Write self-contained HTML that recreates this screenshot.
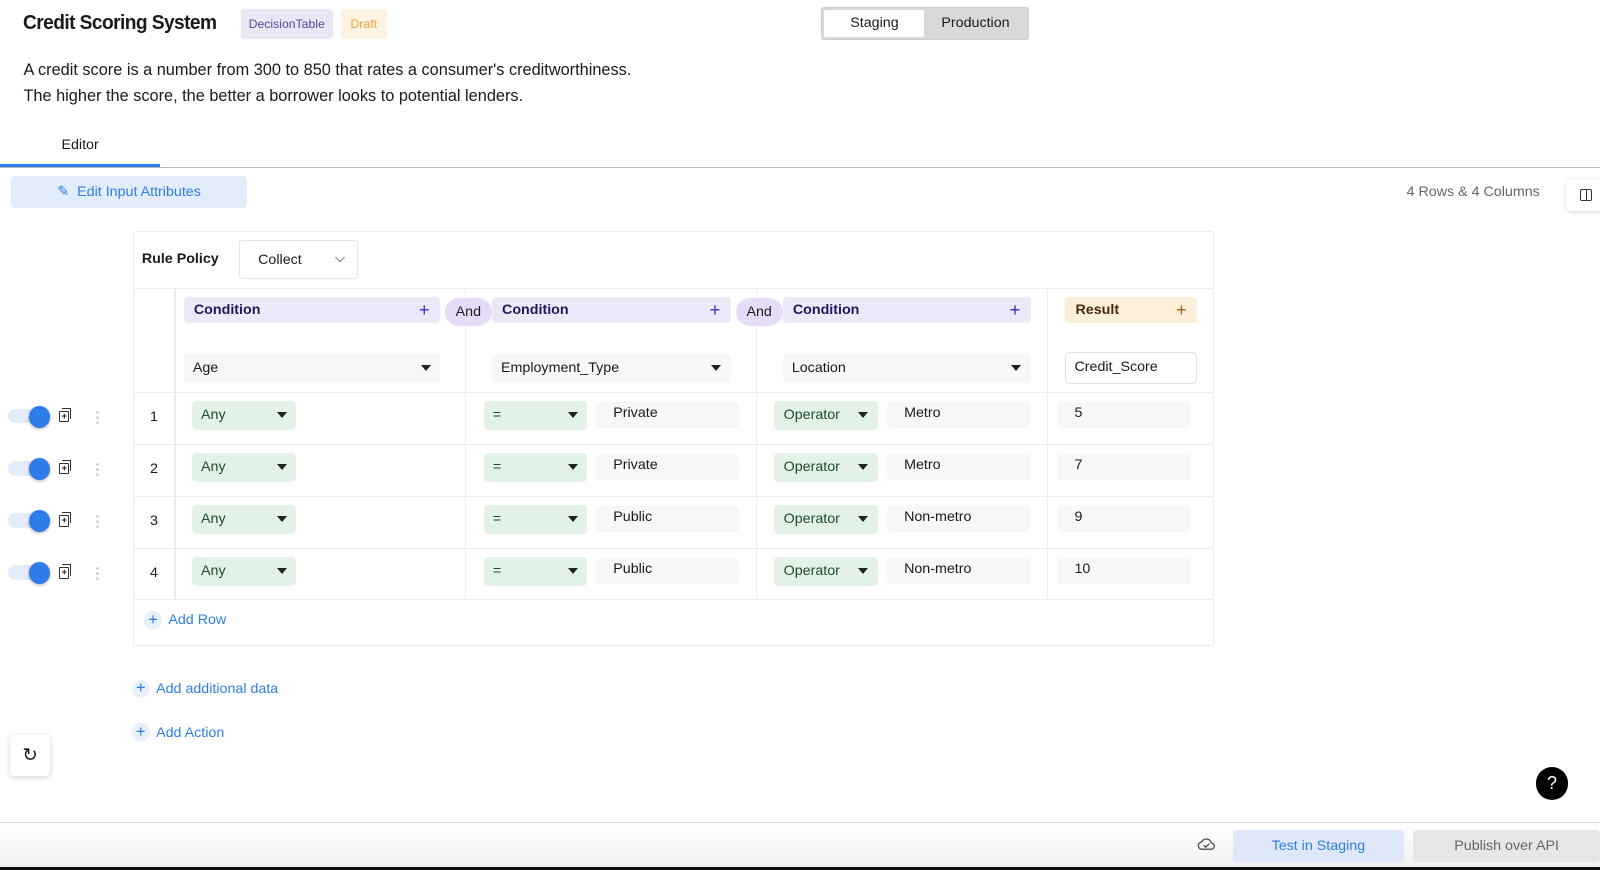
<!DOCTYPE html>
<html><head><meta charset="utf-8"><style>
*{box-sizing:border-box;margin:0;padding:0}
html,body{width:1600px;height:870px;overflow:hidden;background:#fff}
#w{zoom:1.0204;width:1568px;height:853px;position:relative;font-family:"Liberation Sans",sans-serif;color:#1a1a1a}
.a{position:absolute}
.pill{position:absolute;border-radius:4px;font-size:14px;display:flex;align-items:center}
.hd{background:#ebe8f7;color:#1f1a5e;font-weight:bold;padding:0 10px;justify-content:space-between;height:26px;top:291px}
.hd span.p{color:#3a2fc0;font-weight:normal;font-size:18px}
.and{position:absolute;top:292px;width:46px;height:27px;border-radius:14px;background:#e6dcf7;font-size:14px;display:flex;align-items:center;justify-content:center}
.sel{position:absolute;background:#f6f7f9;border-radius:4px;height:28px;font-size:14px;display:flex;align-items:center;padding:0 9px;justify-content:space-between}
.tri{width:0;height:0;border-left:5px solid transparent;border-right:5px solid transparent;border-top:6px solid #222}
.g{background:#e3f2e6;color:#1f4a2a}
.inp{position:absolute;background:#f6f7f9;border-radius:4px;height:25px;font-size:14px;padding:0 17px;line-height:23px}
.hl{position:absolute;left:131px;width:1058px;height:1px;background:#ececec}
.vl{position:absolute;width:1px;background:#ececec;top:283px;height:304px}
.blue{color:#2f7de8}
.plusc{display:inline-flex;width:18px;height:18px;border-radius:50%;background:#e8f0fc;color:#2f7de8;align-items:center;justify-content:center;font-size:16px;margin-right:6px}
</style></head><body><div id="w">
<div class="a" style="left:23px;top:12px;font-size:20px;font-weight:bold;letter-spacing:-0.6px;transform:scaleX(0.94);transform-origin:left">Credit Scoring System</div>
<div class="pill" style="left:236px;top:9px;width:90px;height:29px;background:#e9e6f5;color:#5a4aa0;font-size:12px;justify-content:center">DecisionTable</div>
<div class="pill" style="left:334px;top:9px;width:45px;height:29px;background:#fdf3e3;color:#e8a23a;font-size:12px;justify-content:center">Draft</div>
<div class="a" style="left:805px;top:7px;width:203px;height:32px;background:#d9d9d9;border-radius:3px;border:1px solid #ccc"></div>
<div class="pill" style="left:808px;top:10px;width:98px;height:26px;background:#fff;justify-content:center;font-size:14px;border-radius:2px">Staging</div>
<div class="a" style="left:906px;top:15px;width:100px;text-align:center;font-size:14px">Production</div>
<div class="a" style="left:23px;top:57px;font-size:16px;line-height:25px">A credit score is a number from 300 to 850 that rates a consumer's creditworthiness.<br>The higher the score, the better a borrower looks to potential lenders.</div>
<div class="a" style="left:0;top:134px;width:157px;text-align:center;font-size:14px">Editor</div>
<div class="a" style="left:0;top:164px;width:1568px;height:1px;background:#bbb"></div>
<div class="a" style="left:0;top:161px;width:157px;height:3px;background:#2f80ed"></div>
<div class="pill blue" style="left:11px;top:172px;width:231px;height:32px;background:#e3ecfb;justify-content:center">✎&nbsp;&nbsp;Edit Input Attributes</div>
<div class="a" style="right:59px;top:180px;font-size:14px;color:#666">4 Rows &amp; 4 Columns</div>
<div class="a" style="left:1535px;top:175px;width:40px;height:32px;background:#fff;box-shadow:0 1px 4px rgba(0,0,0,.15);border-radius:6px"><div class="a" style="left:13px;top:10px;width:12px;height:12px;border:1.5px solid #333;border-radius:2px"></div><div class="a" style="left:19px;top:10px;width:1.5px;height:12px;background:#333"></div></div>

<div class="a" style="left:130px;top:226px;width:1060px;height:407px;border:1px solid #ececec;border-radius:3px"></div>
<div class="a" style="left:139px;top:246px;font-size:14px;font-weight:bold">Rule Policy</div>
<div class="a" style="left:234px;top:235px;width:117px;height:38px;border:1px solid #e5e5e5;border-radius:3px;font-size:14px;padding:11px 18px">Collect<span style="position:absolute;right:12px;top:9px;font-size:13px">⌵</span></div>
<div class="hl" style="top:282px"></div><div class="hl" style="top:384px"></div><div class="hl" style="top:435px"></div><div class="hl" style="top:486px"></div><div class="hl" style="top:537px"></div><div class="hl" style="top:587px"></div>
<div class="vl" style="left:171px"></div><div class="vl" style="left:456px"></div><div class="vl" style="left:741px"></div><div class="vl" style="left:1026px"></div>

<div class="pill hd" style="left:180px;width:251px">Condition<span class="p">+</span></div>
<div class="and" style="left:436px">And</div>
<div class="pill hd" style="left:482px;width:234px">Condition<span class="p">+</span></div>
<div class="and" style="left:721px">And</div>
<div class="pill hd" style="left:767px;width:243px">Condition<span class="p">+</span></div>
<div class="pill hd" style="left:1044px;width:129px;background:#fcefd9;color:#4a2a10">Result<span class="p" style="color:#a8621c">+</span></div>

<div class="sel" style="left:180px;top:347px;width:251px">Age<i class="tri"></i></div>
<div class="sel" style="left:482px;top:347px;width:234px">Employment_Type<i class="tri"></i></div>
<div class="sel" style="left:767px;top:347px;width:243px">Location<i class="tri"></i></div>
<div class="a" style="left:1044px;top:345px;width:129px;height:31px;border:1px solid #e2e2e2;border-radius:4px;font-size:14px;padding:6px 8px">Credit_Score</div>

<div id="rows"></div>
<script>
var d=[["Private","Metro","5"],["Private","Metro","7"],["Public","Non-metro","9"],["Public","Non-metro","10"]],h="";
d.forEach(function(r,i){var y=393+i*51;
h+='<div class="a" style="left:8px;top:'+(y+8)+'px;width:40px;height:14px;border-radius:7px;background:#e3ecfb"></div><div class="a" style="left:28px;top:'+(y+5)+'px;width:21px;height:21px;border-radius:50%;background:#2f7de8;box-shadow:0 1px 3px rgba(0,0,0,.3)"></div>';
h+='<div class="a" style="left:58px;top:'+(y+10)+'px;width:10px;height:11px;border:1.3px solid #333;border-radius:1px;font-size:9px;line-height:8px;text-align:center;font-weight:bold">+</div><div class="a" style="left:61px;top:'+(y+7)+'px;width:9px;height:11px;border-top:1.3px solid #333;border-right:1.3px solid #333"></div>';
h+='<div class="a" style="left:94px;top:'+(y+9)+'px;width:3px;height:14px;background:radial-gradient(circle,#ccc 1.2px,transparent 1.5px) 0 0/3px 5px"></div>';
h+='<div class="a" style="left:147px;top:'+(y+8)+'px;font-size:14px">'+(i+1)+'</div>';
h+='<div class="sel g" style="left:188px;top:'+y+'px;width:102px">Any<i class="tri"></i></div>';
h+='<div class="sel g" style="left:474px;top:'+y+'px;width:101px">=<i class="tri"></i></div>';
h+='<div class="inp" style="left:584px;top:'+(y+1)+'px;width:140px">'+r[0]+'</div>';
h+='<div class="sel g" style="left:759px;top:'+y+'px;width:101px">Operator<i class="tri"></i></div>';
h+='<div class="inp" style="left:869px;top:'+(y+1)+'px;width:140px">'+r[1]+'</div>';
h+='<div class="inp" style="left:1036px;top:'+(y+1)+'px;width:131px">'+r[2]+'</div>';});
document.getElementById('rows').innerHTML=h;
</script>
<div class="a blue" style="left:141px;top:599px;font-size:14px;display:flex;align-items:center"><span class="plusc">+</span>Add Row</div>
<div class="a blue" style="left:129px;top:666px;font-size:14px;display:flex;align-items:center"><span class="plusc">+</span>Add additional data</div>
<div class="a blue" style="left:129px;top:709px;font-size:14px;display:flex;align-items:center"><span class="plusc">+</span>Add Action</div>
<div class="a" style="left:10px;top:720px;width:39px;height:40px;background:#fff;box-shadow:0 1px 5px rgba(0,0,0,.18);border-radius:4px;text-align:center;font-size:18px;line-height:40px">↻</div>
<div class="a" style="left:1505px;top:752px;width:32px;height:32px;border-radius:50%;background:#000;color:#fff;text-align:center;line-height:32px;font-size:18px">?</div>
<div class="a" style="left:0;top:806px;width:1568px;height:47px;background:linear-gradient(#fff,#f0f0f0);border-top:1px solid #ddd"></div>
<svg class="a" style="left:1173px;top:820px" width="18" height="14" viewBox="0 0 18 14"><path d="M5 12h9a3 3 0 0 0 0-6 5 5 0 0 0-9.5-1A3.5 3.5 0 0 0 5 12z" fill="none" stroke="#444" stroke-width="1.2"/><path d="M6.5 8l2 2 3.5-3.5" fill="none" stroke="#444" stroke-width="1.2"/></svg>
<div class="pill blue" style="left:1208px;top:813px;width:168px;height:32px;background:#dfe8f8;justify-content:center">Test in Staging</div>
<div class="pill" style="left:1385px;top:813px;width:183px;height:32px;background:#e6e6e6;color:#666;justify-content:center">Publish over API</div>
<div class="a" style="left:0;top:850px;width:1568px;height:3px;background:#111"></div>
</div></body></html>
